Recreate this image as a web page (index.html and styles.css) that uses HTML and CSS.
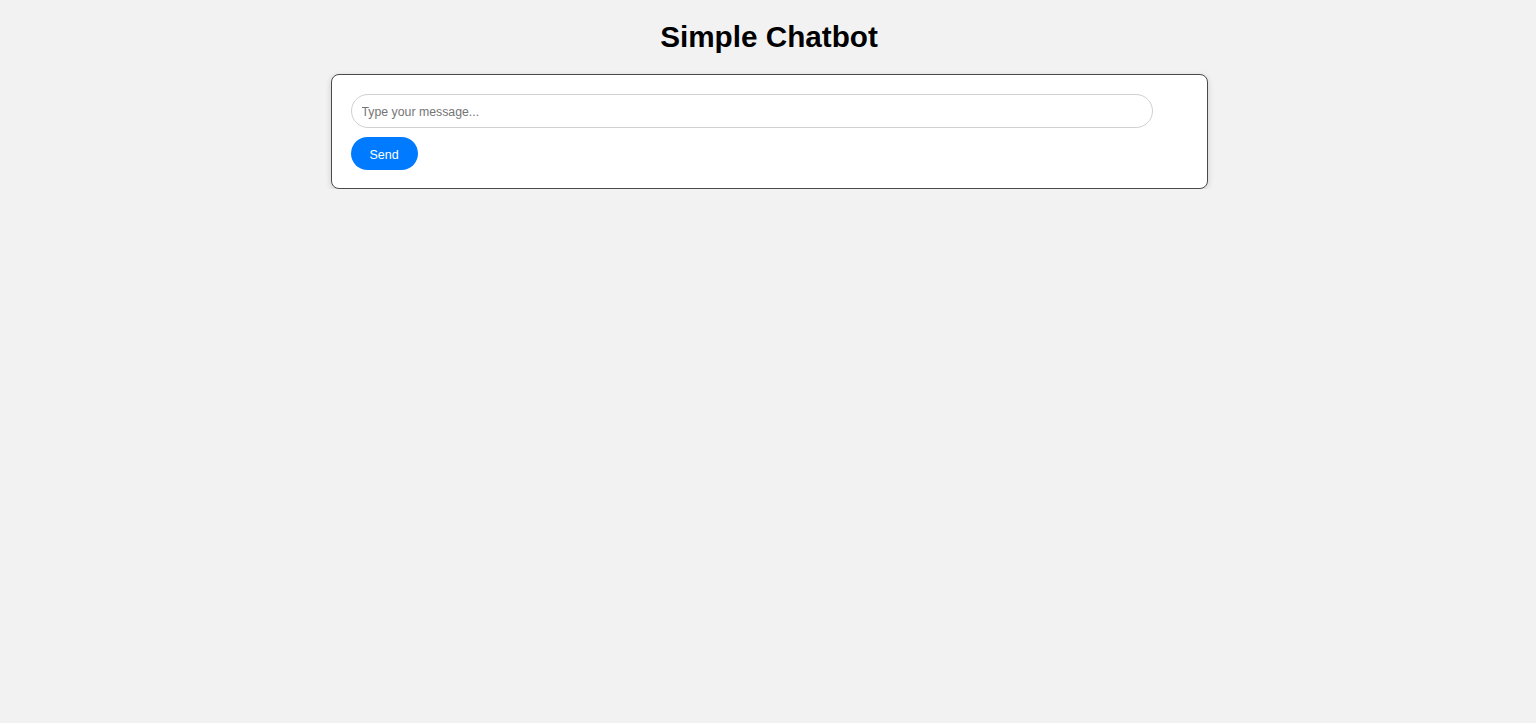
FILE: index.html
```html
<!DOCTYPE html>
<html lang="en">
<head>
<meta charset="utf-8">
<title>Simple Chatbot</title>
<link rel="stylesheet" href="styles.css">
</head>
<body>
  <h1 class="title">Simple Chatbot</h1>
  <div class="chat-container">
    <div class="chat-box"></div>
    <input class="user-input" type="text" placeholder="Type your message...">
    <button class="send-btn" type="button">Send</button>
  </div>
</body>
</html>
```

FILE: styles.css
```css
html, body {
  margin: 0;
  padding: 0;
}
body {
  background: #f2f2f2;
  font-family: Arial, "Liberation Sans", sans-serif;
  padding-top: 18px;
}
.title {
  margin: 0 0 19px;
  font-size: 29.7px;
  line-height: 37px;
  font-weight: bold;
  text-align: center;
  color: #000;
  padding-left: 2px;
}
.chat-container {
  box-sizing: border-box;
  width: 877px;
  margin: 0 auto;
  position: relative;
  left: 1px;
  background: #fff;
  border: 1px solid #4a4a4a;
  border-radius: 8px;
  box-shadow: 0 2px 6px rgba(0,0,0,0.15);
  padding: 19px 19px 18px;
}
.user-input {
  display: block;
  box-sizing: border-box;
  width: 802px;
  height: 34px;
  padding: 9px 10px 7px;
  border: 1px solid #d0d0d0;
  border-radius: 17px;
  font-family: Arial, "Liberation Sans", sans-serif;
  font-size: 12.3px;
  color: #333;
  outline: none;
  margin: 0 0 9px;
}
.user-input::placeholder {
  color: #757575;
}
.send-btn {
  display: block;
  box-sizing: border-box;
  width: 67px;
  height: 33px;
  padding: 2px 0 0;
  border: none;
  border-radius: 17px;
  background: #007bff;
  color: #fff;
  font-family: Arial, "Liberation Sans", sans-serif;
  font-size: 12.5px;
  cursor: pointer;
}
```
